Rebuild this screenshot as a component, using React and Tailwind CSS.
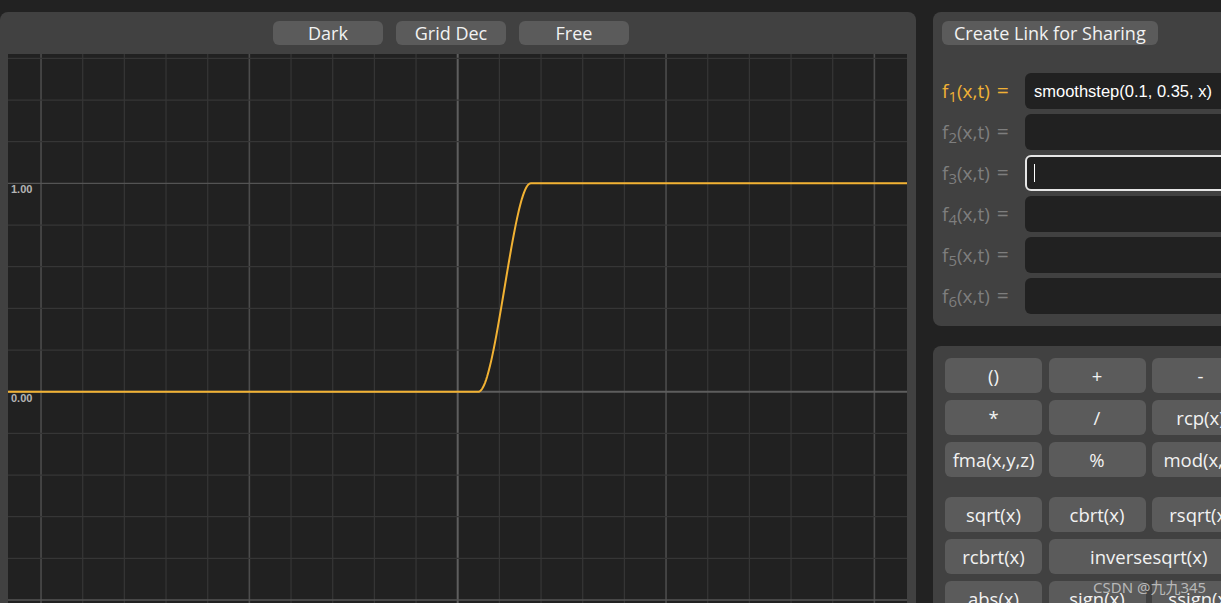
import React from "react";

const W = 899;
const H = 690;
const OX = 449.7;
const OY = 337.7;
const C = 41.667;
const U = C * 5;

function smooth(x) {
  const t = Math.min(1, Math.max(0, (x - 0.1) / 0.25));
  return t * t * (3 - 2 * t);
}

function Graph() {
  const lines = [];
  for (let k = -11; k <= 11; k++) {
    const x = OX + k * C;
    if (x < 0 || x > W) continue;
    const axis = k === 0;
    const major = k % 5 === 0;
    lines.push(
      <line key={"v" + k} x1={x} y1={0} x2={x} y2={H} stroke={axis ? "#5e5e5e" : major ? "#4c4c4c" : "#363636"} strokeWidth={axis ? 2 : major ? 1.6 : 1.2} />
    );
  }
  for (let k = -9; k <= 9; k++) {
    const y = OY + k * C;
    if (y < 0 || y > H) continue;
    const axis = k === 0;
    const major = k % 5 === 0;
    lines.push(
      <line key={"h" + k} x1={0} y1={y} x2={W} y2={y} stroke={axis ? "#5e5e5e" : major ? "#545454" : "#363636"} strokeWidth={axis ? 2 : major ? 1.4 : 1.2} />
    );
  }
  let d = "";
  for (let px = 0; px <= W; px += 1) {
    const x = (px - OX) / U;
    const y = OY - smooth(x) * U;
    d += (px === 0 ? "M" : "L") + px + " " + y.toFixed(2) + " ";
  }
  return (
    <svg width={W} height={H} viewBox={`0 0 ${W} ${H}`} className="block">
      <rect width={W} height={H} fill="#212121" />
      {lines}
      <path d={d} fill="none" stroke="#f2b233" strokeWidth="2" />
      <g fill="#b4b4b4" fontSize="11" fontWeight="600" fontFamily="'Liberation Sans', Arial, sans-serif">
        <text x="3" y={OY - U + 9.5}>1.00</text>
        <text x="3" y={OY + 10.5}>0.00</text>
        <text x="3" y={OY + U + 10.5}>-1.00</text>
      </g>
    </svg>
  );
}

function TopBtn({ children }) {
  return (
    <div className="w-[110px] h-[24px] rounded-[6px] bg-[#5b5b5b] text-[#f2f2f2] text-[18px] leading-[24px] text-center">
      {children}
    </div>
  );
}

function Label({ n, active }) {
  return (
    <div className={`w-[83px] shrink-0 text-[19px] whitespace-nowrap ${active ? "text-[#f0b135]" : "text-[#7e7e7e]"}`}>
      f<span className="relative top-[4px] text-[15px]">{n}</span>(x,t)<span className="ml-[7px] text-[21px]">=</span>
    </div>
  );
}

function Row({ n, active, value, focused }) {
  return (
    <div className="flex items-center h-[36px]">
      <Label n={n} active={active} />
      <div
        className={`w-[320px] h-[36px] shrink-0 rounded-[6px] bg-[#212121] flex items-center text-white text-[16.5px] font-['Liberation_Sans',Arial,sans-serif] ${
          focused ? "border-2 border-[#e6e6e6] pl-[7px]" : "pl-[9px]"
        }`}
      >
        {value}
        {focused && <span className="w-px h-[18px] bg-white" />}
      </div>
    </div>
  );
}

function Key({ children, span }) {
  return (
    <div
      className={`h-[35px] rounded-[6px] bg-[#5b5b5b] text-[#f2f2f2] text-[18.5px] leading-[35px] text-center whitespace-nowrap overflow-hidden ${
        span ? "col-span-2" : ""
      }`}
    >
      {children}
    </div>
  );
}

export default function App() {
  return (
    <div className="relative w-[1221px] h-[603px] overflow-hidden bg-[#222222] font-['Open_Sans',sans-serif]">
      <div className="flex items-start gap-[17px] pt-3">
        <div className="w-[916px] shrink-0 h-[740px] rounded-lg bg-[#414141] flex flex-col">
          <div className="h-[42px] shrink-0 flex items-center justify-center gap-[13px] pr-[14px]">
            <TopBtn>Dark</TopBtn>
            <TopBtn>Grid Dec</TopBtn>
            <TopBtn>Free</TopBtn>
          </div>
          <div className="ml-2 shrink-0">
            <Graph />
          </div>
        </div>

        <div className="w-[420px] shrink-0 flex flex-col gap-5">
          <div className="h-[314px] rounded-lg bg-[#414141] pl-[9px] pt-[9px]">
            <div className="inline-block h-[24px] px-[12px] rounded-[6px] bg-[#5b5b5b] text-[#f2f2f2] text-[18px] leading-[24px]">
              Create Link for Sharing
            </div>
            <div className="mt-[27px] flex flex-col gap-[5px]">
              <Row n={1} active value="smoothstep(0.1, 0.35, x)" />
              <Row n={2} />
              <Row n={3} focused />
              <Row n={4} />
              <Row n={5} />
              <Row n={6} />
            </div>
          </div>

          <div className="h-[300px] rounded-lg bg-[#414141] pl-3 pt-3">
            <div className="grid grid-cols-[repeat(4,97px)] gap-x-[6.5px] gap-y-[7px]">
              <Key>()</Key>
              <Key>+</Key>
              <Key>-</Key>
              <Key>÷</Key>
              <Key>*</Key>
              <Key>/</Key>
              <Key>rcp(x)</Key>
              <Key>x^y</Key>
              <Key>fma(x,y,z)</Key>
              <Key>%</Key>
              <Key>mod(x,y)</Key>
              <Key>pi</Key>
            </div>
            <div className="mt-[20px] grid grid-cols-[repeat(4,97px)] gap-x-[6.5px] gap-y-[7px]">
              <Key>sqrt(x)</Key>
              <Key>cbrt(x)</Key>
              <Key>rsqrt(x)</Key>
              <Key>pow(x,y)</Key>
              <Key>rcbrt(x)</Key>
              <Key span>inversesqrt(x)</Key>
              <Key>exp(x)</Key>
              <Key>abs(x)</Key>
              <Key>sign(x)</Key>
              <Key>ssign(x)</Key>
              <Key>floor(x)</Key>
            </div>
          </div>
        </div>
      </div>

      <div className="absolute left-[1093px] top-[576px] text-[15px] text-[#d8d8d8]/75 font-['Noto_Sans','Noto_Sans_CJK_SC',sans-serif] whitespace-nowrap">
        CSDN @九九345
      </div>
    </div>
  );
}
